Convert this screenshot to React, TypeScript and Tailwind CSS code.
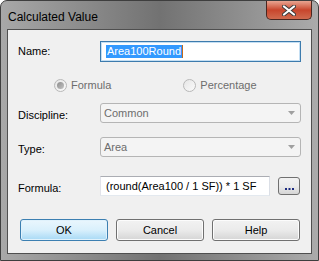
import React from 'react'

const font = { fontFamily: '"Liberation Sans", Arial, sans-serif' }

function Radio({ label, checked }: { label: string; checked?: boolean }) {
  return (
    <div className="flex items-center gap-[4px]">
      <span className="w-[13px] h-[13px] rounded-full border border-[#b8b8b8] bg-gradient-to-br from-[#e6e6e6] to-[#fafafa] flex items-center justify-center">
        {checked && <span className="w-[7px] h-[7px] rounded-full bg-gradient-to-br from-[#8c8c8c] to-[#c4c4c4]" />}
      </span>
      <span className="text-[11px] text-[#6d6d6d]">{label}</span>
    </div>
  )
}

function Select({ value }: { value: string }) {
  return (
    <div className="w-[201px] h-[20px] rounded-[3px] border border-[#b5b5b5] bg-[#f4f4f4] flex items-center justify-between pl-[3px] pr-[5px]">
      <span className="text-[11px] text-[#6d6d6d]">{value}</span>
      <svg width="7" height="4" viewBox="0 0 7 4">
        <path d="M0 0h7L3.5 4z" fill="#a0a0a0" />
      </svg>
    </div>
  )
}

function Button({ label, primary }: { label: string; primary?: boolean }) {
  return (
    <button
      className={`w-[88px] h-[22px] rounded-[3px] border text-[11px] text-black flex items-center justify-center ${
        primary
          ? 'border-[#3c7fb1] bg-gradient-to-b from-[#eaf6fd] via-[#d9f0fc] to-[#a7d9f5] shadow-[inset_0_0_0_1px_#e0f2fc]'
          : 'border-[#707070] bg-gradient-to-b from-[#f2f2f2] via-[#ebebeb] to-[#d5d5d5] shadow-[inset_0_0_0_1px_#fcfcfc]'
      }`}
    >
      {label}
    </button>
  )
}

export default function App() {
  return (
    <div style={font} className="w-[319px] h-[261px] bg-white">
      <div className="w-[319px] h-[261px] rounded-t-[7px] border border-[#3e3e3e] bg-gradient-to-r from-[#a8a8a8] via-[#727272] to-[#ababab] flex flex-col px-[6px] pb-[6px]">
        <div className="h-[28px] flex items-start justify-between">
          <span className="text-[12px] text-black pl-[1px] pt-[7px]">Calculated Value</span>
          <div className="w-[46px] h-[19px] rounded-b-[5px] border border-t-0 border-[#4a2620] bg-gradient-to-b from-[#e8a491] via-[#c8452c] to-[#d06a4e] flex items-center justify-center">
            <svg width="14" height="11" viewBox="0 0 14 11">
              <path d="M2 1.5L12 9.5M12 1.5L2 9.5" stroke="#3a3a3a" strokeWidth="4" strokeLinecap="round" />
              <path d="M2 1.5L12 9.5M12 1.5L2 9.5" stroke="#ffffff" strokeWidth="2.2" strokeLinecap="round" />
            </svg>
          </div>
        </div>
        <div className="flex-1 border border-[#4f4f4f] bg-[#f0f0f0] flex flex-col px-[10px] pt-[11px]">
          <div className="flex items-center h-[21px]">
            <span className="w-[82px] text-[11px] text-black leading-[13px]">Name:</span>
            <div className="w-[201px] h-[21px] border border-[#3d7bad] shadow-[inset_0_0_0_1px_#c5dff3] bg-white flex items-center pl-[5px]">
              <span className="text-[11px] text-white bg-[#3399ff] leading-[13px] px-[1px]">Area100Round</span>
              <span className="w-[1px] h-[13px] bg-[#c46a1c]" />
            </div>
          </div>
          <div className="flex mt-[15px] h-[14px]">
            <div className="ml-[36px]">
              <Radio label="Formula" checked />
            </div>
            <div className="ml-[72px]">
              <Radio label="Percentage" />
            </div>
          </div>
          <div className="flex items-center h-[20px] mt-[12px]">
            <span className="w-[82px] text-[11px] text-black leading-[13px] mt-[4px]">Discipline:</span>
            <Select value="Common" />
          </div>
          <div className="flex items-center h-[20px] mt-[14px]">
            <span className="w-[82px] text-[11px] text-black leading-[13px] mt-[5px]">Type:</span>
            <Select value="Area" />
          </div>
          <div className="flex items-center h-[20px] mt-[19px]">
            <span className="w-[82px] text-[11px] text-black leading-[13px] mt-[5px]">Formula:</span>
            <div className="w-[170px] h-[20px] border border-[#abadb3] border-l-[#e2e3ea] border-r-[#dbdfe6] border-b-[#e3e9ef] bg-white flex items-center pl-[5px]">
              <span className="text-[11px] text-black">(round(Area100 / 1 SF)) * 1 SF</span>
            </div>
            <div className="ml-[8px] w-[22px] h-[18px] rounded-[3px] border border-[#707070] bg-gradient-to-b from-[#f2f2f2] via-[#ebebeb] to-[#d5d5d5] flex items-end justify-center pb-[4px]">
              <svg width="9" height="2" viewBox="0 0 9 2">
                <rect x="0" y="0" width="2" height="2" fill="#1c2a80" />
                <rect x="3.5" y="0" width="2" height="2" fill="#1c2a80" />
                <rect x="7" y="0" width="2" height="2" fill="#1c2a80" />
              </svg>
            </div>
          </div>
          <div className="flex gap-[8px] mt-[23px] ml-[2px]">
            <Button label="OK" primary />
            <Button label="Cancel" />
            <Button label="Help" />
          </div>
        </div>
      </div>
    </div>
  )
}
